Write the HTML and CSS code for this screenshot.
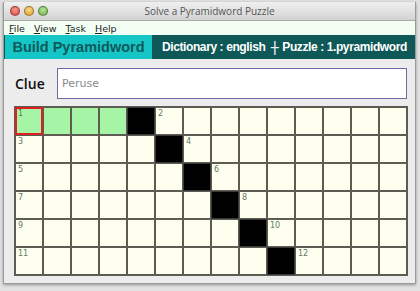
FILE: index.html
```html
<!DOCTYPE html>
<html>
<head>
<meta charset="utf-8">
<link rel="stylesheet" href="styles.css">
</head>
<body>
<div class="window">
  <div class="titlebar">
    <div class="lights">
      <span class="light red"></span>
      <span class="light yellow"></span>
      <span class="light green"></span>
    </div>
    <div class="title">Solve a Pyramidword Puzzle</div>
  </div>
  <div class="menubar">
    <span class="menu"><u>F</u>ile</span>
    <span class="menu"><u>V</u>iew</span>
    <span class="menu"><u>T</u>ask</span>
    <span class="menu"><u>H</u>elp</span>
  </div>
  <div class="header">
    <div class="build">Build Pyramidword</div>
    <div class="info">Dictionary : english <span class="sep">-|-</span> Puzzle : 1.pyramidword</div>
  </div>
  <div class="content">
    <div class="clue-row">
      <div class="clue-label">Clue</div>
      <div class="clue-input">Peruse</div>
    </div>
    <div class="grid" id="grid"></div>
  </div>
</div>
<script src="script.js"></script>
</body>
</html>
```
FILE: styles.css
```css
html, body {
  margin: 0;
  padding: 0;
}
body {
  width: 420px;
  height: 291px;
  background: #e2e2e2;
  padding: 2px 0 0 3px;
  box-sizing: border-box;
  font-family: "DejaVu Sans", sans-serif;
}
.window {
  width: 413px;
  height: 282px;
  background: #ececec;
  border: 1px solid #9a9a9a;
  border-top: none;
  box-sizing: border-box;
  display: flex;
  flex-direction: column;
  box-shadow: 0 1px 3px rgba(0,0,0,0.35);
}
.titlebar {
  height: 18px;
  background: linear-gradient(#f0f0f0, #d2d2d2);
  border-bottom: 1px solid #a8a8a8;
  display: flex;
  align-items: center;
  position: relative;
  border-radius: 4px 4px 0 0;
}
.lights {
  display: flex;
  gap: 4px;
  padding-left: 6px;
}
.light {
  width: 8px;
  height: 8px;
  border-radius: 50%;
  border: 0.5px solid rgba(0,0,0,0.35);
}
.light.red { background: radial-gradient(circle at 50% 35%, #f59a92, #d8403a); }
.light.yellow { background: radial-gradient(circle at 50% 35%, #fbd98a, #e09a22); }
.light.green { background: radial-gradient(circle at 50% 35%, #b8e59a, #6cae3e); }
.title {
  position: absolute;
  left: 0;
  right: 0;
  text-align: center;
  font-size: 10px;
  color: #555;
  font-family: "Open Sans", "DejaVu Sans", sans-serif;
}
.menubar {
  height: 14px;
  background: #f2fff2;
  display: flex;
  align-items: center;
  gap: 9px;
  padding-left: 5px;
  font-size: 9.5px;
  color: #222;
  font-family: "DejaVu Sans", sans-serif;
}
.menu u { text-decoration-thickness: 1px; text-underline-offset: 1px; }
.header {
  height: 24px;
  background: #0e5858;
  display: flex;
  align-items: stretch;
}
.build {
  margin-left: 1px;
  width: 147px;
  flex: none;
  background: #16c6c6;
  color: #0e5a5a;
  font-family: "Liberation Sans", Arial, sans-serif;
  font-weight: bold;
  font-size: 14.5px;
  white-space: nowrap;
  display: flex;
  align-items: center;
  justify-content: center;
}
.info {
  color: #ffffff;
  font-family: "Liberation Sans", Arial, sans-serif;
  font-weight: bold;
  font-size: 12px;
  letter-spacing: -0.4px;
  display: flex;
  align-items: center;
  padding-left: 10px;
  white-space: nowrap;
}
.sep {
  font-weight: normal;
  font-size: 14px;
  margin: 0 5px;
  letter-spacing: -2px;
}
.content {
  padding: 9px 0 0 10px;
}
.clue-row {
  display: flex;
  align-items: center;
  height: 31px;
}
.clue-label {
  width: 42px;
  padding-left: 1px;
  font-family: "Open Sans", "DejaVu Sans", sans-serif;
  font-size: 14px;
  color: #111;
  font-weight: 600;
}
.clue-input {
  width: 350px;
  height: 31px;
  box-sizing: border-box;
  border: 1px solid #6e6aa8;
  background: #ffffff;
  color: #8a8a8a;
  font-family: "DejaVu Sans", sans-serif;
  font-size: 11px;
  display: flex;
  align-items: center;
  padding-left: 4px;
}
.grid {
  margin-top: 7px;
  display: grid;
  grid-template-columns: repeat(14, 28px);
  grid-template-rows: repeat(6, 28px);
  width: 392px;
  background: #5c5c52;
  border: 1px solid #5c5c52;
  box-sizing: content-box;
  margin-left: 0;
}
.cell {
  background: #fffff0;
  box-shadow: inset 0 0 0 1px #5c5c52;
  position: relative;
  font-size: 8px;
  color: #5a7a6a;
  font-family: "DejaVu Sans", sans-serif;
  padding: 2px 0 0 3px;
  box-sizing: border-box;
}
.cell.green { background: #a6f5a6; }
.cell.black { background: #000000; box-shadow: inset 0 0 0 1px #3a3a3a; }
.cell.sel { box-shadow: inset 0 0 0 2px #e02020; }
```
FILE: script.js
```js
var grid = document.getElementById('grid');
var num = 1;
for (var r = 0; r < 6; r++) {
  for (var c = 0; c < 14; c++) {
    var d = document.createElement('div');
    d.className = 'cell';
    if (c === r + 4) d.className += ' black';
    if (r === 0 && c < 4) d.className += ' green';
    if (r === 0 && c === 0) d.className += ' sel';
    if (c === 0 || c === r + 5) { d.textContent = num++; }
    grid.appendChild(d);
  }
}
```
